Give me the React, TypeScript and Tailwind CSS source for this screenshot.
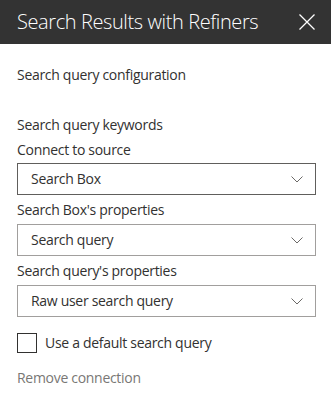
import { useState } from 'react';

function Chevron() {
  return (
    <svg width="12" height="7" viewBox="0 0 12 7" className="shrink-0">
      <path d="M0.5 0.5 L6 6 L11.5 0.5" fill="none" stroke="#6b6967" strokeWidth="1" />
    </svg>
  );
}

function Dropdown({ value, dark }: { value: string; dark?: boolean }) {
  return (
    <div
      className={`mt-[4px] h-[32px] flex items-center justify-between pl-[13px] pr-[12px] border ${
        dark ? 'border-[#605e5c]' : 'border-[#a19f9d]'
      }`}
    >
      <span>{value}</span>
      <Chevron />
    </div>
  );
}

export default function App() {
  const [checked, setChecked] = useState(false);

  return (
    <div
      className="w-[331px] h-[415px] bg-white text-[#323130] text-[14px] leading-[20px] tracking-[-0.3px]"
      style={{ fontFamily: '"Open Sans", "Noto Sans", sans-serif' }}
    >
      <div className="h-[44px] bg-[#333333] flex items-center justify-between pl-[17px] pr-[16px]">
        <h1 className="text-white text-[20px] font-light leading-[28px] tracking-[-0.4px]">
          Search Results with Refiners
        </h1>
        <button className="text-white" aria-label="Close">
          <svg width="16" height="16" viewBox="0 0 16 16">
            <path d="M0.5 0.5 L15.5 15.5 M15.5 0.5 L0.5 15.5" stroke="#ffffff" strokeWidth="1.3" fill="none" />
          </svg>
        </button>
      </div>

      <div className="pl-[17px] pr-[15px]">
        <div className="mt-[21px]">Search query configuration</div>
        <div className="mt-[30px]">Search query keywords</div>
        <div className="mt-[5px]">Connect to source</div>
        <div className="-mt-[1px]">
          <Dropdown value="Search Box" dark />
        </div>
        <div className="mt-[5px]">Search Box's properties</div>
        <Dropdown value="Search query" />
        <div className="mt-[5px]">Search query's properties</div>
        <Dropdown value="Raw user search query" />

        <label className="mt-[16px] flex items-center gap-[8px] cursor-pointer">
          <span
            onClick={() => setChecked(!checked)}
            className="w-[20px] h-[20px] border border-[#323130] flex items-center justify-center"
          >
            {checked && <span className="text-[12px]">✓</span>}
          </span>
          <span>Use a default search query</span>
        </label>

        <div className="mt-[15px] text-[#797775]">Remove connection</div>
      </div>
    </div>
  );
}
